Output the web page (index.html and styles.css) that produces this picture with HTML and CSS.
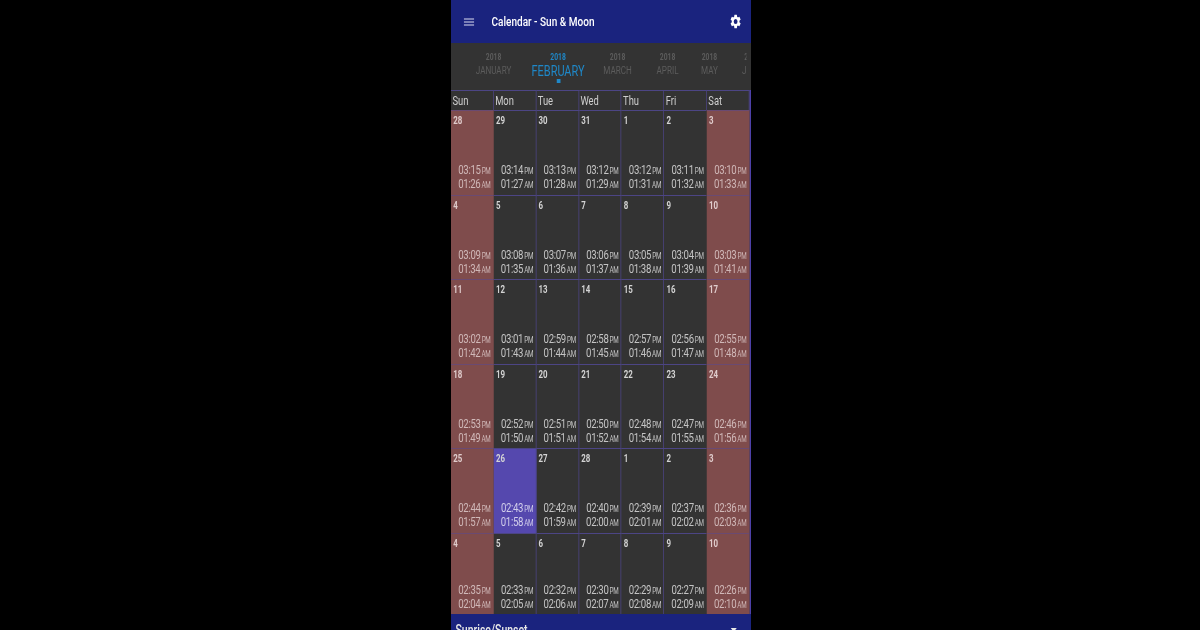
FILE: index.html
```html
<!DOCTYPE html>
<html lang="en">
<head>
    <meta charset="UTF-8">
    <meta name="viewport" content="width=device-width, initial-scale=1.0">
    <title>Calendar - Sun &amp; Moon</title>
    <link rel="stylesheet" href="styles.css">
</head>
<body>
    <div class="phone">
        <div class="screen">
            <header class="app-bar">
                <svg class="menu-icon" viewBox="0 0 14 8"><path d="M0 1h14M0 4h14M0 7h14"/></svg>
                <div class="app-title">Calendar - Sun &amp; Moon</div>
                <svg class="gear-icon" viewBox="0 0 24 24"><path d="M19.14 12.94c.04-.3.06-.61.06-.94 0-.32-.02-.64-.07-.94l2.03-1.58a.49.49 0 0 0 .12-.61l-1.92-3.32a.49.49 0 0 0-.59-.22l-2.39.96c-.5-.38-1.03-.7-1.62-.94l-.36-2.54a.48.48 0 0 0-.48-.41h-3.84a.48.48 0 0 0-.47.41l-.36 2.54c-.59.24-1.13.57-1.62.94l-2.39-.96a.48.48 0 0 0-.59.22L2.74 8.87a.48.48 0 0 0 .12.61l2.03 1.58c-.05.3-.09.63-.09.94s.02.64.07.94l-2.03 1.58a.49.49 0 0 0-.12.61l1.92 3.32c.12.22.37.29.59.22l2.39-.96c.5.38 1.03.7 1.62.94l.36 2.54c.05.24.24.41.48.41h3.84c.24 0 .44-.17.47-.41l.36-2.54c.59-.24 1.13-.56 1.62-.94l2.39.96c.22.08.47 0 .59-.22l1.92-3.32a.47.47 0 0 0-.12-.61l-2.01-1.58zM12 15.6A3.6 3.6 0 1 1 12 8.4a3.6 3.6 0 0 1 0 7.2z"/></svg>
            </header>

            <nav class="months">
                <div class="month m-jan"><span class="year">2018</span><span class="name">JANUARY</span></div>
                <div class="month m-feb active"><span class="year">2018</span><span class="name">FEBRUARY</span><i class="dot"></i></div>
                <div class="month m-mar"><span class="year">2018</span><span class="name">MARCH</span></div>
                <div class="month m-apr"><span class="year">2018</span><span class="name">APRIL</span></div>
                <div class="month m-may"><span class="year">2018</span><span class="name">MAY</span></div>
                <div class="month m-jun"><span class="year">2018</span><span class="name">JUNE</span></div>
            </nav>

            <div class="calendar">
                <div class="dow">Sun</div><div class="dow">Mon</div><div class="dow">Tue</div><div class="dow">Wed</div><div class="dow">Thu</div><div class="dow">Fri</div><div class="dow">Sat</div>

                <div class="day weekend"><b>28</b><p>03:15<small>PM</small></p><p>01:26<small>AM</small></p></div>
                <div class="day"><b>29</b><p>03:14<small>PM</small></p><p>01:27<small>AM</small></p></div>
                <div class="day"><b>30</b><p>03:13<small>PM</small></p><p>01:28<small>AM</small></p></div>
                <div class="day"><b>31</b><p>03:12<small>PM</small></p><p>01:29<small>AM</small></p></div>
                <div class="day"><b>1</b><p>03:12<small>PM</small></p><p>01:31<small>AM</small></p></div>
                <div class="day"><b>2</b><p>03:11<small>PM</small></p><p>01:32<small>AM</small></p></div>
                <div class="day weekend"><b>3</b><p>03:10<small>PM</small></p><p>01:33<small>AM</small></p></div>

                <div class="day weekend"><b>4</b><p>03:09<small>PM</small></p><p>01:34<small>AM</small></p></div>
                <div class="day"><b>5</b><p>03:08<small>PM</small></p><p>01:35<small>AM</small></p></div>
                <div class="day"><b>6</b><p>03:07<small>PM</small></p><p>01:36<small>AM</small></p></div>
                <div class="day"><b>7</b><p>03:06<small>PM</small></p><p>01:37<small>AM</small></p></div>
                <div class="day"><b>8</b><p>03:05<small>PM</small></p><p>01:38<small>AM</small></p></div>
                <div class="day"><b>9</b><p>03:04<small>PM</small></p><p>01:39<small>AM</small></p></div>
                <div class="day weekend"><b>10</b><p>03:03<small>PM</small></p><p>01:41<small>AM</small></p></div>

                <div class="day weekend"><b>11</b><p>03:02<small>PM</small></p><p>01:42<small>AM</small></p></div>
                <div class="day"><b>12</b><p>03:01<small>PM</small></p><p>01:43<small>AM</small></p></div>
                <div class="day"><b>13</b><p>02:59<small>PM</small></p><p>01:44<small>AM</small></p></div>
                <div class="day"><b>14</b><p>02:58<small>PM</small></p><p>01:45<small>AM</small></p></div>
                <div class="day"><b>15</b><p>02:57<small>PM</small></p><p>01:46<small>AM</small></p></div>
                <div class="day"><b>16</b><p>02:56<small>PM</small></p><p>01:47<small>AM</small></p></div>
                <div class="day weekend"><b>17</b><p>02:55<small>PM</small></p><p>01:48<small>AM</small></p></div>

                <div class="day weekend"><b>18</b><p>02:53<small>PM</small></p><p>01:49<small>AM</small></p></div>
                <div class="day"><b>19</b><p>02:52<small>PM</small></p><p>01:50<small>AM</small></p></div>
                <div class="day"><b>20</b><p>02:51<small>PM</small></p><p>01:51<small>AM</small></p></div>
                <div class="day"><b>21</b><p>02:50<small>PM</small></p><p>01:52<small>AM</small></p></div>
                <div class="day"><b>22</b><p>02:48<small>PM</small></p><p>01:54<small>AM</small></p></div>
                <div class="day"><b>23</b><p>02:47<small>PM</small></p><p>01:55<small>AM</small></p></div>
                <div class="day weekend"><b>24</b><p>02:46<small>PM</small></p><p>01:56<small>AM</small></p></div>

                <div class="day weekend"><b>25</b><p>02:44<small>PM</small></p><p>01:57<small>AM</small></p></div>
                <div class="day today"><b>26</b><p>02:43<small>PM</small></p><p>01:58<small>AM</small></p></div>
                <div class="day"><b>27</b><p>02:42<small>PM</small></p><p>01:59<small>AM</small></p></div>
                <div class="day"><b>28</b><p>02:40<small>PM</small></p><p>02:00<small>AM</small></p></div>
                <div class="day"><b>1</b><p>02:39<small>PM</small></p><p>02:01<small>AM</small></p></div>
                <div class="day"><b>2</b><p>02:37<small>PM</small></p><p>02:02<small>AM</small></p></div>
                <div class="day weekend"><b>3</b><p>02:36<small>PM</small></p><p>02:03<small>AM</small></p></div>

                <div class="day weekend"><b>4</b><p>02:35<small>PM</small></p><p>02:04<small>AM</small></p></div>
                <div class="day"><b>5</b><p>02:33<small>PM</small></p><p>02:05<small>AM</small></p></div>
                <div class="day"><b>6</b><p>02:32<small>PM</small></p><p>02:06<small>AM</small></p></div>
                <div class="day"><b>7</b><p>02:30<small>PM</small></p><p>02:07<small>AM</small></p></div>
                <div class="day"><b>8</b><p>02:29<small>PM</small></p><p>02:08<small>AM</small></p></div>
                <div class="day"><b>9</b><p>02:27<small>PM</small></p><p>02:09<small>AM</small></p></div>
                <div class="day weekend"><b>10</b><p>02:26<small>PM</small></p><p>02:10<small>AM</small></p></div>
            </div>

            <footer class="panel">
                <span>Sunrise/Sunset</span>
                <i class="panel-arrow"></i>
            </footer>
        </div>
    </div>
</body>
</html>
```

FILE: styles.css
```css
body {
    margin: 0;
    padding-left: 2px;
    height: 630px;
    display: flex;
    justify-content: center;
    background-color: black;
    font-family: Roboto, sans-serif;
    overflow: hidden;
}

/* The screenshot is a phone capture squeezed sideways, so the screen is laid
   out wider and scaled back down to 300px */
.phone {
    width: 300px;
    height: 630px;
    overflow: hidden;
}

.screen {
    width: 400px;
    height: 630px;
    display: flex;
    flex-direction: column;
    background-color: #333;
    transform: scaleX(0.75);
    transform-origin: left top;
    filter: blur(0.5px);
}

.app-bar {
    flex: none;
    height: 43px;
    display: flex;
    align-items: center;
    padding: 0 12px 0 17px;
    background-color: #1a237e;
    color: #fff;
}

.menu-icon {
    width: 14px;
    height: 8px;
    fill: none;
    stroke: #dcdef0;
    stroke-width: 1.1;
}

.app-title {
    flex: 1;
    margin-left: 23px;
    font-size: 13.4px;
    font-weight: 500;
}

.gear-icon {
    width: 17px;
    height: 17px;
    fill: #fff;
}

.months {
    flex: none;
    height: 47px;
    display: flex;
    padding-left: 33px;
    width: 361px;
    overflow: hidden;
    color: #5c5c5c;
}

.month {
    flex: none;
    position: relative;
    display: flex;
    flex-direction: column;
    align-items: center;
    padding-top: 9px;
}

.m-feb { margin-left: 27px; }
.m-mar { margin-left: 25px; }
.m-apr { margin-left: 33px; }
.m-may { margin-left: 30px; }
.m-jun { margin-left: 32px; }

.year {
    font-size: 9px;
    font-weight: 700;
    line-height: 11px;
}

.name {
    margin-top: 1px;
    font-size: 10.8px;
    line-height: 14px;
}

.active {
    color: #1f88c8;
}

.active .name {
    font-size: 14.6px;
    line-height: 16px;
    margin-top: 0;
}

.dot {
    position: absolute;
    left: 50%;
    top: 36px;
    width: 5px;
    height: 4px;
    margin-left: -2px;
    background-color: #1f88c8;
}

.calendar {
    flex: none;
    height: 524px;
    display: grid;
    grid-template-columns: repeat(7, 1fr);
    grid-template-rows: 20px repeat(5, 84.6px) 1fr;
    border-right: 2px solid #4d40a8;
    background-color: #333;
}

.dow {
    padding-left: 2px;
    font-size: 12.5px;
    line-height: 19px;
    color: #d0d0d0;
    border-top: 1px solid #4c4585;
    border-right: 1px solid #4c4585;
    box-sizing: border-box;
}

.day {
    display: flex;
    flex-direction: column;
    justify-content: flex-end;
    padding: 0 3px 3.5px 3px;
    border-top: 1px solid #4c4585;
    border-right: 1px solid #4c4585;
    box-sizing: border-box;
    color: #c4c4c4;
}

/* no line between a weekday and the red weekend columns */
.day:nth-child(7n+6) {
    border-right-color: transparent;
}

.day b {
    margin-top: 3px;
    margin-bottom: auto;
    font-size: 10.5px;
    font-weight: 700;
    color: #d4d4d4;
}

.day p {
    margin: 0;
    font-size: 12.8px;
    letter-spacing: -0.45px;
    line-height: 14px;
    text-align: right;
    white-space: nowrap;
}

.day small {
    margin-left: 1.5px;
    font-size: 8.4px;
    letter-spacing: -0.3px;
    line-height: 0;
}

.weekend {
    background-color: #7f4c4c;
    border-top-color: #6a4a72;
    border-right-color: transparent;
    color: #d0b8b8;
}

.weekend b {
    color: #e0cccc;
}

.today {
    background-color: #5548ae;
    color: #d0cdea;
}

.panel {
    flex: 1;
    position: relative;
    padding: 8px 0 0 6px;
    background-color: #1a237e;
    color: #e8e8e8;
    font-size: 14px;
    font-weight: 500;
}

.panel-arrow {
    position: absolute;
    right: 19px;
    top: 14px;
    border-left: 4px solid transparent;
    border-right: 4px solid transparent;
    border-top: 4px solid #e8e8e8;
}
```
